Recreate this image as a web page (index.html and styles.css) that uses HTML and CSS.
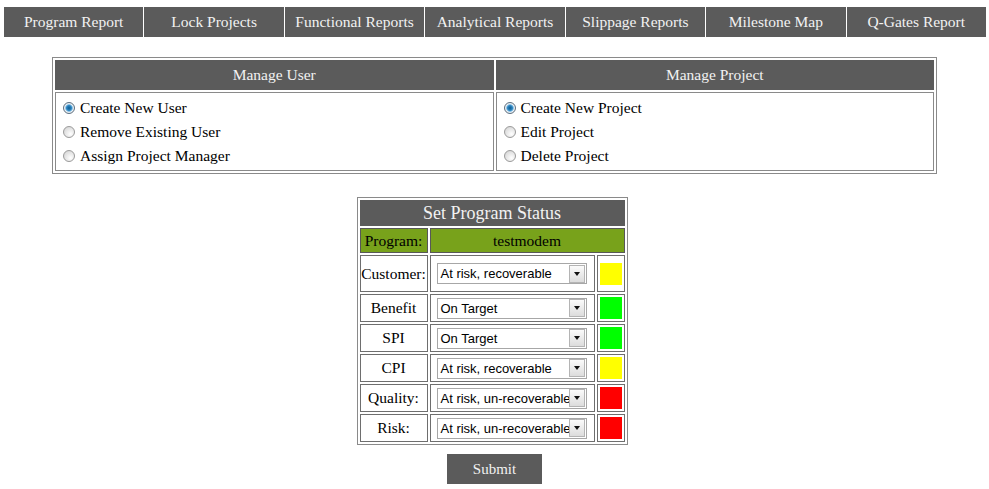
FILE: index.html
```html
<!DOCTYPE html>
<html>
<head>
<meta charset="utf-8">
<title>Admin</title>
<link rel="stylesheet" href="styles.css">
</head>
<body>
<nav class="nav">
  <a class="nav-item">Program Report</a>
  <a class="nav-item">Lock Projects</a>
  <a class="nav-item">Functional Reports</a>
  <a class="nav-item">Analytical Reports</a>
  <a class="nav-item">Slippage Reports</a>
  <a class="nav-item">Milestone Map</a>
  <a class="nav-item">Q-Gates Report</a>
</nav>

<table class="manage">
  <tr>
    <th>Manage User</th>
    <th>Manage Project</th>
  </tr>
  <tr>
    <td>
      <div class="opt"><span class="radio on"></span>Create New User</div>
      <div class="opt"><span class="radio"></span>Remove Existing User</div>
      <div class="opt"><span class="radio"></span>Assign Project Manager</div>
    </td>
    <td>
      <div class="opt"><span class="radio on"></span>Create New Project</div>
      <div class="opt"><span class="radio"></span>Edit Project</div>
      <div class="opt"><span class="radio"></span>Delete Project</div>
    </td>
  </tr>
</table>

<table class="status">
  <tr><th colspan="3" class="status-title">Set Program Status</th></tr>
  <tr class="prog">
    <td class="lbl">Program:</td>
    <td colspan="2">testmodem</td>
  </tr>
  <tr class="row tall">
    <td class="lbl">Customer:</td>
    <td class="sel"><div class="select"><span class="sel-text">At risk, recoverable</span><span class="arrow"></span></div></td>
    <td class="sw"><div class="swatch yellow"></div></td>
  </tr>
  <tr class="row">
    <td class="lbl">Benefit</td>
    <td class="sel"><div class="select"><span class="sel-text">On Target</span><span class="arrow"></span></div></td>
    <td class="sw"><div class="swatch green"></div></td>
  </tr>
  <tr class="row">
    <td class="lbl">SPI</td>
    <td class="sel"><div class="select"><span class="sel-text">On Target</span><span class="arrow"></span></div></td>
    <td class="sw"><div class="swatch green"></div></td>
  </tr>
  <tr class="row">
    <td class="lbl">CPI</td>
    <td class="sel"><div class="select"><span class="sel-text">At risk, recoverable</span><span class="arrow"></span></div></td>
    <td class="sw"><div class="swatch yellow"></div></td>
  </tr>
  <tr class="row">
    <td class="lbl">Quality:</td>
    <td class="sel"><div class="select"><span class="sel-text">At risk, un-recoverable</span><span class="arrow"></span></div></td>
    <td class="sw"><div class="swatch red"></div></td>
  </tr>
  <tr class="row">
    <td class="lbl">Risk:</td>
    <td class="sel"><div class="select"><span class="sel-text">At risk, un-recoverable</span><span class="arrow"></span></div></td>
    <td class="sw"><div class="swatch red"></div></td>
  </tr>
</table>

<div class="actions">
  <button class="submit" type="button">Submit</button>
</div>
</body>
</html>
```

FILE: styles.css
```css
html, body {
  margin: 0;
  padding: 0;
  background: #ffffff;
}

body {
  font-family: "Liberation Serif", "Times New Roman", serif;
  font-size: 15.5px;
  color: #000;
}

.nav {
  display: flex;
  gap: 1px;
  margin: 7px 3px 0 4px;
  height: 30px;
}

.nav-item {
  flex: 1 1 0;
  background: #5b5b5b;
  color: #f2f2f2;
  font-size: 15.5px;
  display: flex;
  align-items: center;
  justify-content: center;
  white-space: nowrap;
}

.manage {
  width: 885px;
  margin: 20px auto 0;
  border: 1px solid #8a8a8a;
  border-spacing: 2px;
  table-layout: fixed;
}

.manage th {
  background: #5b5b5b;
  color: #f2f2f2;
  font-weight: normal;
  font-size: 15.5px;
  line-height: 28px;
  padding: 0;
  border: 1px solid #5b5b5b;
}

.manage td {
  border: 1px solid #8a8a8a;
  padding: 3px 0 2px 7px;
  vertical-align: top;
}

.opt {
  height: 24px;
  display: flex;
  align-items: center;
  white-space: nowrap;
}

.radio {
  width: 10px;
  height: 10px;
  border-radius: 50%;
  border: 1px solid #9a9a9a;
  background: radial-gradient(circle at 65% 70%, #ffffff 0, #f0f0f0 30%, #cfcfcf 100%);
  margin-right: 5px;
  flex: none;
}

.radio.on {
  border-color: #5c6f80;
  background: radial-gradient(circle at 50% 50%, #0b5c93 0, #2f86c0 2.5px, #8cc3e8 3.5px, #eef2f5 4.2px, #d5d5d5 100%);
}

.status {
  width: 271px;
  margin: 23px 0 0 calc(50% - 138px);
  border: 1px solid #8a8a8a;
  border-spacing: 2px;
  text-align: center;
}

.status td, .status th {
  padding: 0;
}

.status-title {
  background: #5b5b5b;
  color: #f2f2f2;
  font-weight: normal;
  font-size: 18px;
  line-height: 24px;
  border: 1px solid #5b5b5b;
}

.prog td {
  background: #78a21b;
  border: 1px solid #585858;
  line-height: 23px;
  color: #000;
}

.lbl {
  width: 66px;
  border: 1px solid #6e6e6e;
  white-space: nowrap;
}

.row td {
  height: 26px;
}

.row.tall td {
  height: 35px;
}

.sel {
  border: 1px solid #6e6e6e;
  width: 157px;
  padding-left: 6px !important;
  text-align: left;
}

.sw {
  border: 1px solid #6e6e6e;
  width: 26px;
}

.select {
  width: 148px;
  height: 19px;
  border: 1px solid #a7a7a7;
  background: #fff;
  display: flex;
  align-items: center;
  overflow: hidden;
  font-family: "Liberation Sans", Arial, sans-serif;
  font-size: 13px;
}

.sel-text {
  padding-left: 3px;
  white-space: nowrap;
  overflow: hidden;
  flex: 1 1 auto;
  min-width: 0;
}

.arrow {
  flex: none;
  width: 14px;
  height: 16px;
  margin-right: 1px;
  border: 1px solid #b4b4b4;
  background: linear-gradient(#fbfbfb, #dcdcdc);
  display: flex;
  align-items: center;
  justify-content: center;
}

.arrow::after {
  content: "";
  width: 0;
  height: 0;
  border-left: 3.5px solid transparent;
  border-right: 3.5px solid transparent;
  border-top: 4px solid #111;
}

.swatch {
  width: 22px;
  height: 22px;
  margin: 0 auto;
}

.yellow { background: #ffff00; }
.green { background: #00ff00; }
.red { background: #ff0000; }

.actions {
  display: flex;
  justify-content: center;
  margin-top: 9px;
}

.submit {
  width: 95px;
  height: 30px;
  border: none;
  background: #5b5b5b;
  color: #f2f2f2;
  font-family: "Liberation Serif", "Times New Roman", serif;
  font-size: 15px;
  padding: 0;
}
```
